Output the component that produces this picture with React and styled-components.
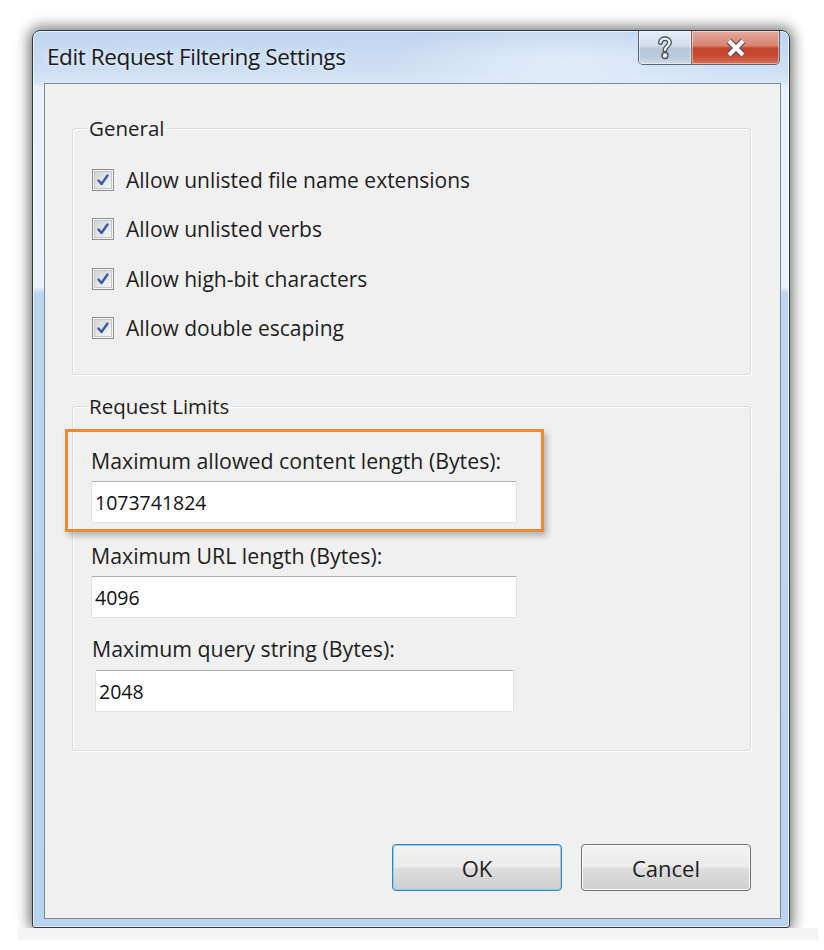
import React from "react";
import styled, { createGlobalStyle } from "styled-components";

const Global = createGlobalStyle`
  html, body { margin: 0; padding: 0; background: #ffffff; }
  body { font-family: "Open Sans", "Noto Sans", sans-serif; }
  * { box-sizing: border-box; }
`;

const Page = styled.div`
  width: 824px;
  display: flex;
  flex-direction: column;
`;

const Stage = styled.div`
  height: 928px;
  overflow: hidden;
  padding: 30px 0 0 32px;
`;

const Strip = styled.div`
  margin-left: 18px;
  width: 800px;
  height: 12px;
  background: #f4f4f4;
`;

const Window = styled.div`
  width: 758px;
  height: 898px;
  border: 1px solid #303840;
  border-radius: 8px 8px 3px 3px;
  background: linear-gradient(
    to bottom,
    #bfd5f0 0px,
    #cddff4 40px,
    #d8e6f7 52px,
    #e8f0fa 56px,
    #eaf2fb 256px,
    #bdd5f0 262px,
    #b9d2ef 100%
  );
  box-shadow: 0 0 14px 3px rgba(0, 0, 0, 0.55), inset 0 0 0 1px rgba(255, 255, 255, 0.6);
  display: flex;
  flex-direction: column;
  padding: 0 8px 8px 11px;
`;

const TitleBar = styled.div`
  height: 52px;
  display: flex;
  align-items: flex-start;
  background: radial-gradient(ellipse 180px 40px at 520px 30px, rgba(255, 255, 255, 0.45), rgba(255, 255, 255, 0) 100%);
`;

const Title = styled.div`
  flex: 1;
  margin-top: 12px;
  padding-left: 3px;
  font-family: "Open Sans", "Noto Sans", sans-serif;
  font-size: 22.5px;
  letter-spacing: -0.4px;
  line-height: 28px;
  color: #1a1a1a;
  text-shadow: 0 0 8px rgba(255, 255, 255, 0.9);
`;

const CaptionButtons = styled.div`
  display: flex;
  margin-right: 1px;
  height: 34px;
  border: 1px solid #5c6570;
  border-top: none;
  border-radius: 0 0 5px 5px;
  overflow: hidden;
`;

const CaptionButton = styled.div`
  width: ${(p) => p.$w}px;
  height: 100%;
  display: flex;
  align-items: center;
  justify-content: center;
  background: ${(p) =>
    p.$close
      ? "linear-gradient(to bottom, #e6aa9d 0%, #d9826f 45%, #c2452d 52%, #c64a31 75%, #d5725c 100%)"
      : "linear-gradient(to bottom, #e4ecf5 0%, #d3deea 45%, #b9c8d8 52%, #bccbdb 80%, #cfdbe7 100%)"};
  border-left: ${(p) => (p.$close ? "1px solid #6e6f73" : "none")};
  box-shadow: inset 0 0 0 1px rgba(255, 255, 255, 0.45);
`;

const Client = styled.div`
  flex: 1;
  border: 1px solid #7f8893;
  background: #f0f0f0;
  display: flex;
  flex-direction: column;
  padding: 31px 29px 27px 27px;
`;

const Group = styled.fieldset`
  margin: ${(p) => (p.$first ? "0" : "18px 0 0 0")};
  padding: 0 0 ${(p) => p.$pb}px 0;
  border: 1px solid #d6dde3;
  border-radius: 3px;
  box-shadow: inset 1px 1px 0 #ffffff, 1px 1px 0 #ffffff;
  min-width: 0;
`;

const Legend = styled.legend`
  margin-left: 14px;
  padding: 0 2px;
  font-size: 20.5px;
  line-height: 26px;
  color: #1e1e1e;
`;

const CheckList = styled.div`
  display: flex;
  flex-direction: column;
  padding: 14px 0 0 19px;
`;

const CheckRow = styled.label`
  height: 49.5px;
  display: flex;
  align-items: center;
  gap: 12px;
  font-size: 21px;
  color: #1e1e1e;
`;

const Box = styled.span`
  width: 22px;
  height: 22px;
  border: 1px solid #8e8f8f;
  background: #f4f4f4;
  display: flex;
  align-items: center;
  justify-content: center;
  flex-shrink: 0;
`;

const BoxInner = styled.span`
  width: 18px;
  height: 18px;
  border: 1px solid #c3c6c9;
  background: linear-gradient(135deg, #d3d5d8 0%, #e6e7e8 60%, #f5f5f5 100%);
  display: flex;
  align-items: center;
  justify-content: center;
`;

const Fields = styled.div`
  display: flex;
  flex-direction: column;
  padding: 10px 0 0 18px;
`;

const Highlight = styled.div`
  margin-left: -26px;
  width: 479px;
  border: 3px solid #ec8a36;
  padding: 15px 24px 6px 23px;
  box-shadow: 3px 4px 6px rgba(0, 0, 0, 0.25);
  display: flex;
  flex-direction: column;
`;

const FieldLabel = styled.div`
  margin: ${(p) => p.$mt || 0}px 0 0 ${(p) => p.$inset || 0}px;
  font-size: 21.3px;
  line-height: 28px;
  color: #1e1e1e;
  white-space: nowrap;
`;

const TextBox = styled.div`
  margin: ${(p) => p.$mt || 6}px 0 0 ${(p) => p.$inset || 0}px;
  width: ${(p) => p.$w || 426}px;
  height: 42px;
  background: #ffffff;
  border: 1px solid #dfe3e8;
  border-top-color: #abadb3;
  border-radius: 2px;
  padding-left: 3px;
  display: flex;
  align-items: center;
  font-size: 19.5px;
  color: #111;
`;

const ButtonRow = styled.div`
  margin-top: auto;
  display: flex;
  justify-content: flex-end;
  gap: 19px;
`;

const Button = styled.button`
  width: 170px;
  height: 47px;
  border-radius: 4px;
  border: 1px solid ${(p) => (p.$default ? "#3c7fb1" : "#707070")};
  background: linear-gradient(to bottom, #f2f2f2 0%, #ebebeb 48%, #dddddd 52%, #cfcfcf 100%);
  box-shadow: inset 0 0 0 1px ${(p) => (p.$default ? "#8fd0f3" : "#fbfbfb")};
  font-family: "Open Sans", "Noto Sans", sans-serif;
  font-size: 22px;
  color: #1e1e1e;
  padding: 0;
`;

function CheckIcon() {
  return (
    <svg width="14" height="14" viewBox="0 0 14 14">
      <path d="M2.5 7.5 L5.5 11 L11.5 2.5" fill="none" stroke="#3a5aa8" strokeWidth="2.4" strokeLinecap="round" strokeLinejoin="round" />
    </svg>
  );
}

function HelpIcon() {
  return (
    <svg width="18" height="26" viewBox="0 0 18 26">
      <g fill="none" strokeLinecap="round" strokeLinejoin="round">
        <path d="M4.5 7.5 C4.5 2.5 13.5 2.5 13.5 7.5 C13.5 11 9 11.5 9 15" stroke="#4a5563" strokeWidth="5" />
        <circle cx="9" cy="20.5" r="1.2" stroke="#4a5563" strokeWidth="5" />
        <path d="M4.5 7.5 C4.5 2.5 13.5 2.5 13.5 7.5 C13.5 11 9 11.5 9 15" stroke="#ffffff" strokeWidth="2.2" />
        <circle cx="9" cy="20.5" r="1.2" stroke="#ffffff" strokeWidth="2.2" />
      </g>
    </svg>
  );
}

function CloseIcon() {
  return (
    <svg width="24" height="20" viewBox="0 0 24 20">
      <g strokeLinecap="butt">
        <path d="M5 3 L19 17 M19 3 L5 17" stroke="#50545a" strokeWidth="6.5" />
        <path d="M5 3 L19 17 M19 3 L5 17" stroke="#ffffff" strokeWidth="4" />
      </g>
    </svg>
  );
}

const checks = [
  "Allow unlisted file name extensions",
  "Allow unlisted verbs",
  "Allow high-bit characters",
  "Allow double escaping",
];

export default function App() {
  return (
    <Page>
      <Global />
      <Stage>
        <Window>
          <TitleBar>
            <Title>Edit Request Filtering Settings</Title>
            <CaptionButtons>
              <CaptionButton $w={52}>
                <HelpIcon />
              </CaptionButton>
              <CaptionButton $w={88} $close>
                <CloseIcon />
              </CaptionButton>
            </CaptionButtons>
          </TitleBar>
          <Client>
            <Group $first $pb={21}>
              <Legend>General</Legend>
              <CheckList>
                {checks.map((c) => (
                  <CheckRow key={c}>
                    <Box>
                      <BoxInner>
                        <CheckIcon />
                      </BoxInner>
                    </Box>
                    {c}
                  </CheckRow>
                ))}
              </CheckList>
            </Group>
            <Group $pb={38}>
              <Legend>Request Limits</Legend>
              <Fields>
                <Highlight>
                  <FieldLabel>Maximum allowed content length (Bytes):</FieldLabel>
                  <TextBox>1073741824</TextBox>
                </Highlight>
                <FieldLabel $mt={10}>Maximum URL length (Bytes):</FieldLabel>
                <TextBox>4096</TextBox>
                <FieldLabel $mt={17} $inset={1}>Maximum query string (Bytes):</FieldLabel>
                <TextBox $mt={7} $inset={4} $w={419}>2048</TextBox>
              </Fields>
            </Group>
            <ButtonRow>
              <Button $default>OK</Button>
              <Button>Cancel</Button>
            </ButtonRow>
          </Client>
        </Window>
      </Stage>
      <Strip />
    </Page>
  );
}
